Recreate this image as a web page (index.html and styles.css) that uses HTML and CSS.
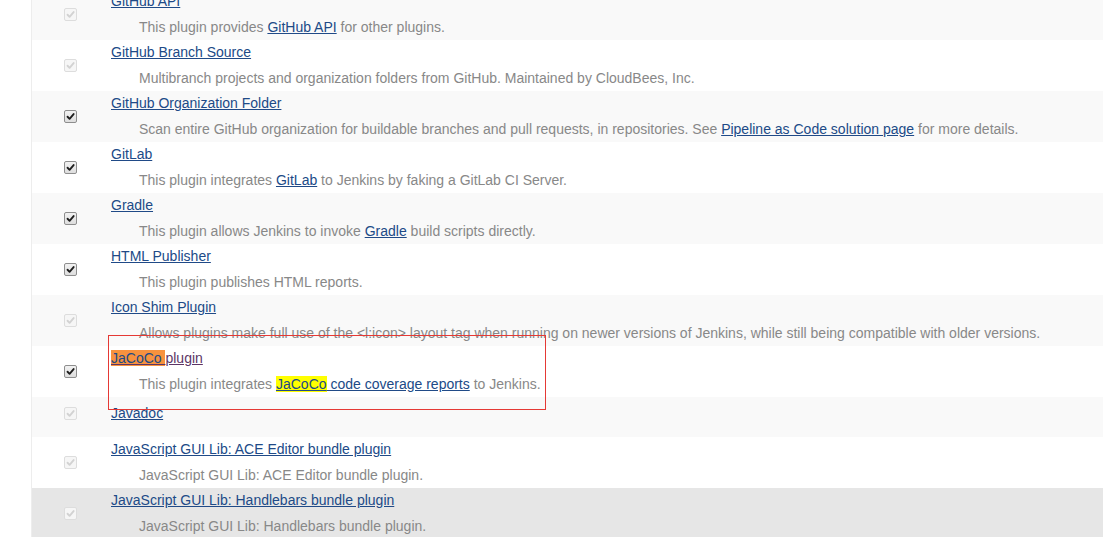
FILE: index.html
```html
<!DOCTYPE html>
<html>
<head>
<meta charset="utf-8">
<link rel="stylesheet" href="styles.css">
</head>
<body>
<div class="page">
  <div class="plugins">
    <div class="row odd first">
      <div class="cb-cell"><span class="cb disabled"><svg viewBox="0 0 13 13"><path d="M3 6.8 L5.4 9.2 L10.2 3.6"/></svg></span></div>
      <div class="info">
        <a class="name" href="#">GitHub API</a>
        <div class="desc">This plugin provides <a href="#">GitHub API</a> for other plugins.</div>
      </div>
    </div>
    <div class="row">
      <div class="cb-cell"><span class="cb disabled"><svg viewBox="0 0 13 13"><path d="M3 6.8 L5.4 9.2 L10.2 3.6"/></svg></span></div>
      <div class="info">
        <a class="name" href="#">GitHub Branch Source</a>
        <div class="desc">Multibranch projects and organization folders from GitHub. Maintained by CloudBees, Inc.</div>
      </div>
    </div>
    <div class="row odd">
      <div class="cb-cell"><span class="cb"><svg viewBox="0 0 13 13"><path d="M3 6.8 L5.4 9.2 L10.2 3.6"/></svg></span></div>
      <div class="info">
        <a class="name" href="#">GitHub Organization Folder</a>
        <div class="desc">Scan entire GitHub organization for buildable branches and pull requests, in repositories. See <a href="#">Pipeline as Code solution page</a> for more details.</div>
      </div>
    </div>
    <div class="row">
      <div class="cb-cell"><span class="cb"><svg viewBox="0 0 13 13"><path d="M3 6.8 L5.4 9.2 L10.2 3.6"/></svg></span></div>
      <div class="info">
        <a class="name" href="#">GitLab</a>
        <div class="desc">This plugin integrates <a href="#">GitLab</a> to Jenkins by faking a GitLab CI Server.</div>
      </div>
    </div>
    <div class="row odd">
      <div class="cb-cell"><span class="cb"><svg viewBox="0 0 13 13"><path d="M3 6.8 L5.4 9.2 L10.2 3.6"/></svg></span></div>
      <div class="info">
        <a class="name" href="#">Gradle</a>
        <div class="desc">This plugin allows Jenkins to invoke <a href="#">Gradle</a> build scripts directly.</div>
      </div>
    </div>
    <div class="row">
      <div class="cb-cell"><span class="cb"><svg viewBox="0 0 13 13"><path d="M3 6.8 L5.4 9.2 L10.2 3.6"/></svg></span></div>
      <div class="info">
        <a class="name" href="#">HTML Publisher</a>
        <div class="desc">This plugin publishes HTML reports.</div>
      </div>
    </div>
    <div class="row odd">
      <div class="cb-cell"><span class="cb disabled"><svg viewBox="0 0 13 13"><path d="M3 6.8 L5.4 9.2 L10.2 3.6"/></svg></span></div>
      <div class="info">
        <a class="name" href="#">Icon Shim Plugin</a>
        <div class="desc">Allows plugins make full use of the &lt;l:icon&gt; layout tag when running on newer versions of Jenkins, while still being compatible with older versions.</div>
      </div>
    </div>
    <div class="row">
      <div class="cb-cell"><span class="cb"><svg viewBox="0 0 13 13"><path d="M3 6.8 L5.4 9.2 L10.2 3.6"/></svg></span></div>
      <div class="info">
        <a class="name visited" href="#"><span class="hl-orange">JaCoCo </span>plugin</a>
        <div class="desc">This plugin integrates <a href="#"><span class="hl-yellow">JaCoCo</span> code coverage reports</a> to Jenkins.</div>
      </div>
    </div>
    <div class="row odd short">
      <div class="cb-cell"><span class="cb disabled"><svg viewBox="0 0 13 13"><path d="M3 6.8 L5.4 9.2 L10.2 3.6"/></svg></span></div>
      <div class="info">
        <a class="name" href="#">Javadoc</a>
      </div>
    </div>
    <div class="row">
      <div class="cb-cell"><span class="cb disabled"><svg viewBox="0 0 13 13"><path d="M3 6.8 L5.4 9.2 L10.2 3.6"/></svg></span></div>
      <div class="info">
        <a class="name" href="#">JavaScript GUI Lib: ACE Editor bundle plugin</a>
        <div class="desc">JavaScript GUI Lib: ACE Editor bundle plugin.</div>
      </div>
    </div>
    <div class="row hover">
      <div class="cb-cell"><span class="cb disabled"><svg viewBox="0 0 13 13"><path d="M3 6.8 L5.4 9.2 L10.2 3.6"/></svg></span></div>
      <div class="info">
        <a class="name" href="#">JavaScript GUI Lib: Handlebars bundle plugin</a>
        <div class="desc">JavaScript GUI Lib: Handlebars bundle plugin.</div>
      </div>
    </div>
  </div>
  <div class="callout"></div>
</div>
</body>
</html>
```

FILE: styles.css
```css
html, body {
  margin: 0;
  padding: 0;
  background: #fff;
}
body {
  font-family: "Liberation Sans", Arial, sans-serif;
  font-size: 14px;
  line-height: 17px;
  color: #333;
  overflow: hidden;
}
.page {
  position: relative;
  height: 537px;
  overflow: hidden;
}
.plugins {
  margin-left: 31px;
  border-left: 1px solid #ededed;
  display: flex;
  flex-direction: column;
}
.row {
  display: grid;
  grid-template-columns: 79px 1fr;
  height: 51px;
  background: #fff;
}
.row.odd {
  background: #f9f9f9;
}
.row.hover {
  background: #e6e6e6;
}
.row.first {
  margin-top: -11px;
}
.row.short {
  height: 40px;
}
.cb-cell {
  display: flex;
  align-items: center;
  padding-left: 32px;
  padding-bottom: 1px;
}
.row.short .cb-cell {
  padding-bottom: 7px;
}
.cb {
  width: 11px;
  height: 11px;
  border: 1px solid #8e8e8e;
  border-radius: 2px;
  background: linear-gradient(#f2f2f2, #dedede);
  display: flex;
  align-items: center;
  justify-content: center;
}
.cb svg {
  width: 11px;
  height: 11px;
}
.cb svg path {
  fill: none;
  stroke: #1e1e1e;
  stroke-width: 2.2;
  stroke-linecap: round;
  stroke-linejoin: round;
}
.cb.disabled {
  border-color: #dddddd;
  background: #f6f6f6;
}
.cb.disabled svg path {
  stroke: #d2d2d2;
}
.info {
  padding-top: 4px;
  white-space: nowrap;
}
.row.short .info {
  padding-top: 8px;
}
a {
  color: #204a87;
  text-decoration: underline;
}
.name {
  display: inline-block;
}
.name.visited {
  color: #5c3566;
}
.name.visited .hl-orange {
  color: #204a87;
}
.desc {
  margin-top: 9px;
  margin-left: 28px;
  color: #888888;
}
.hl-orange {
  background: #f7923e;
}
.hl-yellow {
  background: #ffff00;
}
.callout {
  position: absolute;
  left: 108px;
  top: 335px;
  width: 436px;
  height: 73px;
  border: 1px solid #e53935;
  pointer-events: none;
}
```
